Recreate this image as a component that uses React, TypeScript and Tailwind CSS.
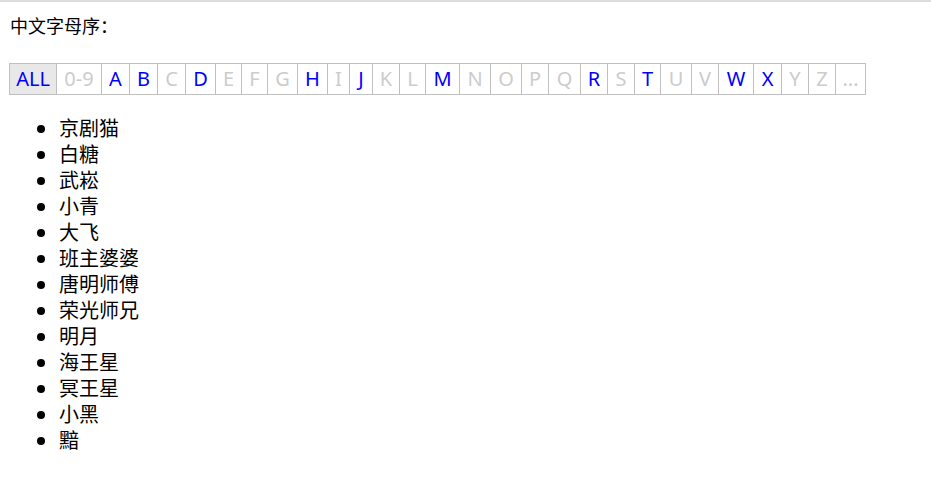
import React from "react";

type Cell = { label: string; on: boolean; w: string; bg?: string };

const cells: Cell[] = [
  { label: "ALL", on: true, w: "w-[47px]", bg: "bg-[#e8e8e8]" },
  { label: "0-9", on: false, w: "w-[45px]" },
  { label: "A", on: true, w: "w-[28px]" },
  { label: "B", on: true, w: "w-[28px]" },
  { label: "C", on: false, w: "w-[28px]" },
  { label: "D", on: true, w: "w-[30px]" },
  { label: "E", on: false, w: "w-[26px]" },
  { label: "F", on: false, w: "w-[26px]" },
  { label: "G", on: false, w: "w-[30px]" },
  { label: "H", on: true, w: "w-[30px]" },
  { label: "I", on: false, w: "w-[22px]" },
  { label: "J", on: true, w: "w-[23px]" },
  { label: "K", on: false, w: "w-[27px]" },
  { label: "L", on: false, w: "w-[26px]" },
  { label: "M", on: true, w: "w-[34px]" },
  { label: "N", on: false, w: "w-[31px]" },
  { label: "O", on: false, w: "w-[31px]" },
  { label: "P", on: false, w: "w-[27px]" },
  { label: "Q", on: false, w: "w-[32px]" },
  { label: "R", on: true, w: "w-[27px]" },
  { label: "S", on: false, w: "w-[27px]" },
  { label: "T", on: true, w: "w-[26px]" },
  { label: "U", on: false, w: "w-[31px]" },
  { label: "V", on: false, w: "w-[27px]" },
  { label: "W", on: true, w: "w-[35px]" },
  { label: "X", on: true, w: "w-[28px]" },
  { label: "Y", on: false, w: "w-[27px]" },
  { label: "Z", on: false, w: "w-[27px]" },
  { label: "...", on: false, w: "w-[30px]" },
];

const names = [
  "京剧猫",
  "白糖",
  "武崧",
  "小青",
  "大飞",
  "班主婆婆",
  "唐明师傅",
  "荣光师兄",
  "明月",
  "海王星",
  "冥王星",
  "小黑",
  "黯",
];

export default function App() {
  return (
    <div
      className="min-h-[477px] w-full bg-white text-black border-t-2 border-[#dcdcdc]"
      style={{ fontFamily: '"Noto Sans", "Noto Sans CJK SC", sans-serif' }}
    >
      <div className="pt-[10px] pl-[10px] text-[18px] leading-[26px] [font-family:'Noto_Sans_CJK_SC',sans-serif]">
        中文字母序：
      </div>
      <div className="mt-[25px] ml-[9px] flex w-max border-l border-[#c0c0c0]">
        {cells.map((c) => (
          <div
            key={c.label}
            className={`${c.w} ${c.bg ?? "bg-white"} ${
              c.on ? "text-[#0000ff]" : "text-[#cccccc]"
            } h-[32px] shrink-0 flex items-center justify-center border-y border-r border-[#c0c0c0] text-[20px] leading-none [font-family:'Noto_Sans',sans-serif]`}
          >
            {c.label}
          </div>
        ))}
      </div>
      <ul className="mt-[20px] pl-[59px] list-disc text-[20px] leading-[26px] [font-family:'Noto_Sans_CJK_SC',sans-serif]">
        {names.map((n) => (
          <li key={n}>{n}</li>
        ))}
      </ul>
    </div>
  );
}
